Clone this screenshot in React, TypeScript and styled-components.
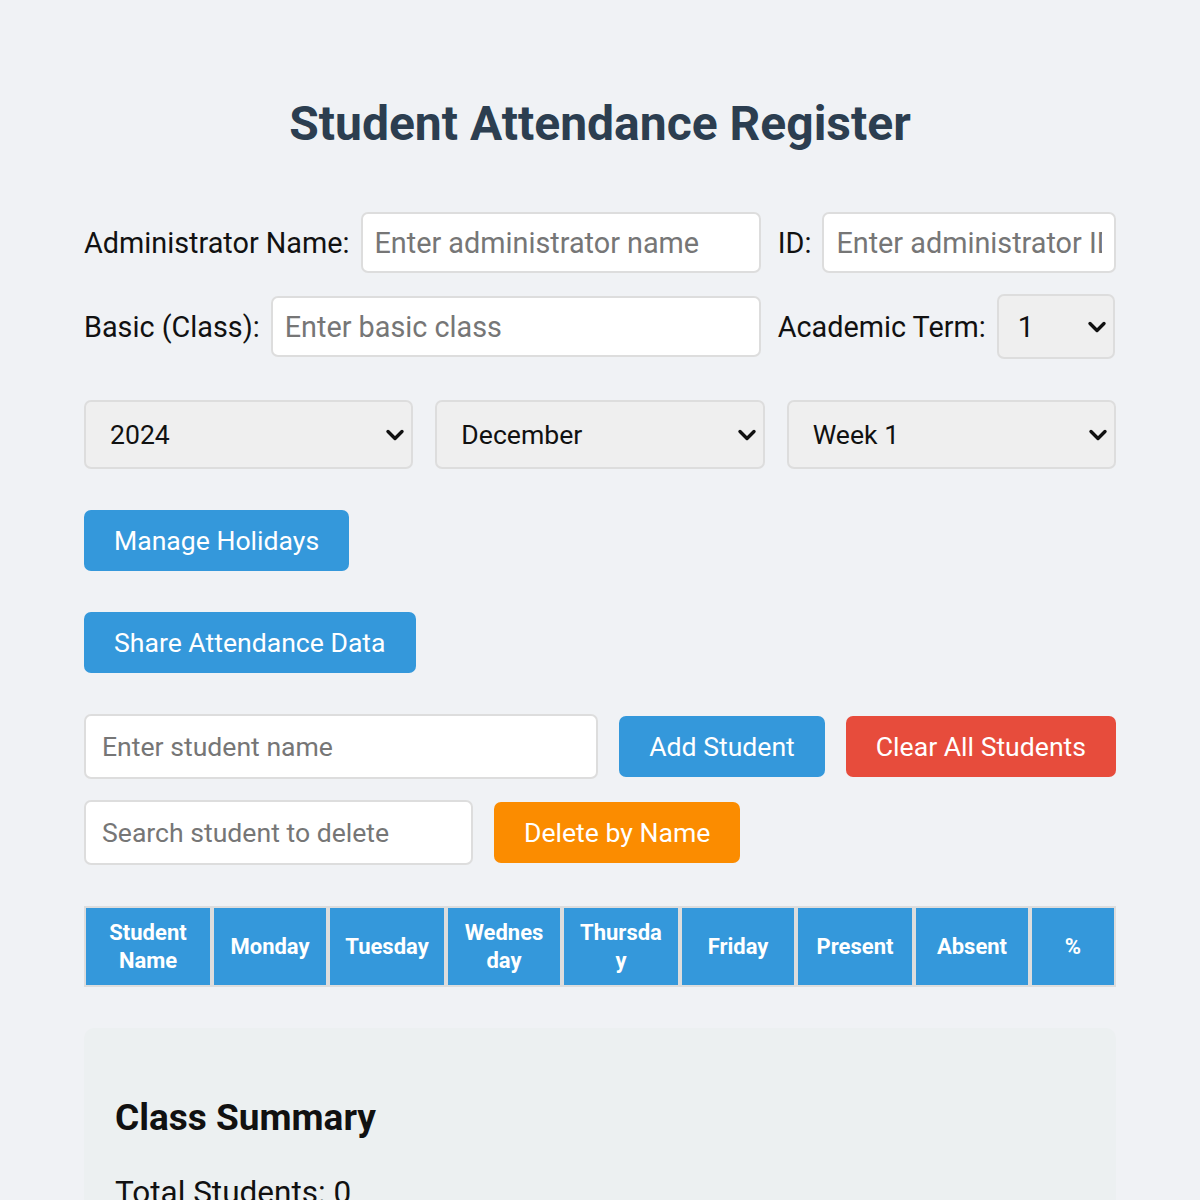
import React from "react";
import styled, { createGlobalStyle } from "styled-components";

const GlobalStyle = createGlobalStyle`
  * { box-sizing: border-box; }
  body {
    margin: 0;
    background: #f0f2f5;
    font-family: Roboto, "Liberation Sans", Arial, sans-serif;
    color: #111;
  }
`;

const Page = styled.div`
  width: 1032px;
  margin: 0 auto;
  padding-bottom: 40px;
`;

const Title = styled.h1`
  margin: 96px 0 60px;
  line-height: 56px;
  font-size: 48px;
  font-weight: 700;
  color: #2c3e50;
  text-align: center;
`;

const InfoGrid = styled.div`
  display: grid;
  grid-template-columns: minmax(0, 2fr) minmax(0, 1fr);
  column-gap: 17px;
  row-gap: 21px;
  align-items: center;
  margin-bottom: 41px;
`;

const Field = styled.div`
  display: flex;
  align-items: center;
  gap: 11px;
  min-width: 0;
`;

const Label = styled.label`
  font-size: 28.8px;
  line-height: 32px;
  white-space: nowrap;
  color: #111;
`;

const TextInput = styled.input<{ $tall?: boolean; $width?: number }>`
  flex: ${(p) => (p.$width ? "0 0 auto" : "1 1 0")};
  width: ${(p) => (p.$width ? `${p.$width}px` : "auto")};
  min-width: 0;
  font-family: inherit;
  font-size: ${(p) => (p.$tall ? "26.6px" : "28.8px")};
  line-height: 32px;
  padding: ${(p) => (p.$tall ? "14.5px 16px" : "12.5px 12px")};
  border: 2px solid #dddddd;
  border-radius: 7px;
  background: #fff;
  color: #222;
  outline: none;
  &::placeholder { color: #767676; }
`;

const SelectWrap = styled.div<{ $width?: number }>`
  position: relative;
  width: ${(p) => (p.$width ? `${p.$width}px` : "100%")};
  flex: 0 0 auto;
`;

const Select = styled.select<{ $tall?: boolean }>`
  appearance: none;
  width: 100%;
  font-family: inherit;
  font-size: ${(p) => (p.$tall ? "26.6px" : "28.8px")};
  line-height: 32px;
  padding: ${(p) => (p.$tall ? "16.5px 40px 16.5px 24px" : "14.5px 40px 14.5px 19px")};
  border: 2px solid #dddddd;
  border-radius: 7px;
  background: #efefef;
  color: #111;
  outline: none;
`;

const Chevron = styled.svg`
  position: absolute;
  right: 8px;
  top: 50%;
  width: 20px;
  height: 12px;
  margin-top: -6px;
  pointer-events: none;
`;

const PeriodGrid = styled.div`
  display: grid;
  grid-template-columns: repeat(3, minmax(0, 1fr));
  gap: 22px;
  margin-bottom: 41px;
`;

const Section = styled.div`
  margin-bottom: 41px;
`;

const Button = styled.button<{ $tone?: "blue" | "red" | "orange" }>`
  font-family: inherit;
  font-size: 26.6px;
  line-height: 32px;
  padding: 14.5px 30px;
  border: none;
  border-radius: 7px;
  color: #fff;
  white-space: nowrap;
  cursor: pointer;
  background: ${(p) =>
    p.$tone === "red" ? "#e74c3c" : p.$tone === "orange" ? "#fb8c00" : "#3498db"};
`;

const ActionRow = styled.div`
  display: flex;
  align-items: center;
  gap: 21px;
  & + & { margin-top: 21px; }
`;

const Actions = styled.div`
  margin-bottom: 41px;
`;

const Table = styled.table`
  width: 1032px;
  table-layout: fixed;
  border-collapse: separate;
  border-spacing: 0;
  margin-bottom: 41px;
`;

const Th = styled.th<{ $w: number }>`
  width: ${(p) => p.$w}px;
  background: #3498db;
  color: #fff;
  font-size: 22px;
  line-height: 28px;
  font-weight: 700;
  padding: 10.5px 13px;
  border: 2px solid #dddddd;
  text-align: center;
  overflow-wrap: anywhere;
`;

const Summary = styled.div`
  background: #ecf0f1;
  border-radius: 10px;
  padding: 31px 31px;
`;

const SummaryTitle = styled.h3`
  margin: 38px 0 36px;
  font-size: 37px;
  line-height: 42px;
  font-weight: 700;
  color: #111;
`;

const SummaryLine = styled.p`
  margin: 0;
  font-size: 31.5px;
  line-height: 36px;
`;

const Down = () => (
  <Chevron viewBox="0 0 20 12">
    <polyline
      points="3,2.5 10,9.5 17,2.5"
      fill="none"
      stroke="#111"
      strokeWidth="3.4"
      strokeLinecap="round"
      strokeLinejoin="round"
    />
  </Chevron>
);

// header label and column width (borders included)
const columns: [string, number][] = [
  ["Student Name", 128],
  ["Monday", 116],
  ["Tuesday", 118],
  ["Wednesday", 116],
  ["Thursday", 118],
  ["Friday", 116],
  ["Present", 118],
  ["Absent", 116],
  ["%", 86],
];

export default function App() {
  return (
    <>
      <GlobalStyle />
      <Page>
        <Title>Student Attendance Register</Title>

        <InfoGrid>
          <Field>
            <Label>Administrator Name:</Label>
            <TextInput placeholder="Enter administrator name" />
          </Field>
          <Field>
            <Label>ID:</Label>
            <TextInput placeholder="Enter administrator ID" />
          </Field>
          <Field>
            <Label>Basic (Class):</Label>
            <TextInput placeholder="Enter basic class" />
          </Field>
          <Field>
            <Label>Academic Term:</Label>
            <SelectWrap $width={118}>
              <Select defaultValue="1">
                <option value="1">1</option>
                <option value="2">2</option>
                <option value="3">3</option>
              </Select>
              <Down />
            </SelectWrap>
          </Field>
        </InfoGrid>

        <PeriodGrid>
          <SelectWrap>
            <Select $tall defaultValue="2024">
              <option>2023</option>
              <option>2024</option>
              <option>2025</option>
            </Select>
            <Down />
          </SelectWrap>
          <SelectWrap>
            <Select $tall defaultValue="December">
              <option>November</option>
              <option>December</option>
            </Select>
            <Down />
          </SelectWrap>
          <SelectWrap>
            <Select $tall defaultValue="Week 1">
              <option>Week 1</option>
              <option>Week 2</option>
              <option>Week 3</option>
              <option>Week 4</option>
            </Select>
            <Down />
          </SelectWrap>
        </PeriodGrid>

        <Section>
          <Button>Manage Holidays</Button>
        </Section>
        <Section>
          <Button>Share Attendance Data</Button>
        </Section>

        <Actions>
          <ActionRow>
            <TextInput $tall placeholder="Enter student name" />
            <Button>Add Student</Button>
            <Button $tone="red">Clear All Students</Button>
          </ActionRow>
          <ActionRow>
            <TextInput $tall $width={389} placeholder="Search student to delete" />
            <Button $tone="orange">Delete by Name</Button>
          </ActionRow>
        </Actions>

        <Table>
          <thead>
            <tr>
              {columns.map(([name, w]) => (
                <Th key={name} $w={w}>
                  {name}
                </Th>
              ))}
            </tr>
          </thead>
        </Table>

        <Summary>
          <SummaryTitle>Class Summary</SummaryTitle>
          <SummaryLine>Total Students: 0</SummaryLine>
        </Summary>
      </Page>
    </>
  );
}
